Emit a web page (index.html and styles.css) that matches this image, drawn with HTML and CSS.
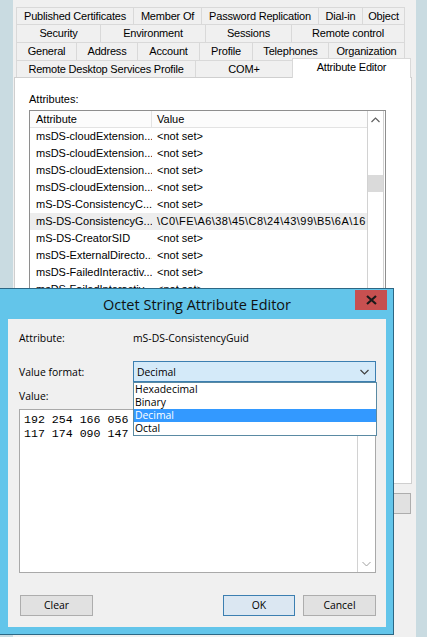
FILE: index.html
```html
<!DOCTYPE html>
<html lang="en">
<head>
    <meta charset="UTF-8">
    <title>Octet String Attribute Editor</title>
    <link rel="stylesheet" href="styles.css">
</head>
<body>
    <!-- background: user properties window -->
    <div class="props">
        <div class="frame-l"></div>
        <div class="client">
            <div class="tab-row r1">
                <div class="tab t-pub">Published Certificates</div>
                <div class="tab t-member">Member Of</div>
                <div class="tab t-pwd">Password Replication</div>
                <div class="tab t-dial">Dial-in</div>
                <div class="tab t-obj last">Object</div>
            </div>
            <div class="tab-row r2">
                <div class="tab t-sec">Security</div>
                <div class="tab t-env">Environment</div>
                <div class="tab t-sess">Sessions</div>
                <div class="tab t-rc last">Remote control</div>
            </div>
            <div class="tab-row r3">
                <div class="tab t-gen">General</div>
                <div class="tab t-addr">Address</div>
                <div class="tab t-acct">Account</div>
                <div class="tab t-prof">Profile</div>
                <div class="tab t-tel">Telephones</div>
                <div class="tab t-org last">Organization</div>
            </div>
            <div class="tab-row r4">
                <div class="tab t-rds">Remote Desktop Services Profile</div>
                <div class="tab t-com">COM+</div>
                <div class="tab t-attr selected last">Attribute Editor</div>
            </div>

            <div class="panel">
                <div class="panel-label">Attributes:</div>
                <div class="listview">
                    <div class="lv-main">
                        <div class="lv-head">
                            <div class="c1">Attribute</div>
                            <div class="c2">Value</div>
                        </div>
                        <div class="lv-row"><div class="c1">msDS-cloudExtension...</div><div class="c2">&lt;not set&gt;</div></div>
                        <div class="lv-row"><div class="c1">msDS-cloudExtension...</div><div class="c2">&lt;not set&gt;</div></div>
                        <div class="lv-row"><div class="c1">msDS-cloudExtension...</div><div class="c2">&lt;not set&gt;</div></div>
                        <div class="lv-row"><div class="c1">msDS-cloudExtension...</div><div class="c2">&lt;not set&gt;</div></div>
                        <div class="lv-row"><div class="c1">mS-DS-ConsistencyC...</div><div class="c2">&lt;not set&gt;</div></div>
                        <div class="lv-row sel"><div class="c1">mS-DS-ConsistencyG...</div><div class="c2 hex">\C0\FE\A6\38\45\C8\24\43\99\B5\6A\16</div></div>
                        <div class="lv-row"><div class="c1">mS-DS-CreatorSID</div><div class="c2">&lt;not set&gt;</div></div>
                        <div class="lv-row"><div class="c1">msDS-ExternalDirecto...</div><div class="c2">&lt;not set&gt;</div></div>
                        <div class="lv-row"><div class="c1">msDS-FailedInteractiv...</div><div class="c2">&lt;not set&gt;</div></div>
                        <div class="lv-row"><div class="c1">msDS-FailedInteractiv...</div><div class="c2">&lt;not set&gt;</div></div>
                        <div class="lv-row"><div class="c1">msDS-GeoCoordinatesA...</div><div class="c2">&lt;not set&gt;</div></div>
                    </div>
                    <div class="lv-scroll">
                        <div class="sb-up">
                            <svg width="9" height="6" viewBox="0 0 9 6"><polyline points="0.5,5 4.5,1 8.5,5" fill="none" stroke="#606060" stroke-width="1.2"/></svg>
                        </div>
                        <div class="sb-thumb"></div>
                    </div>
                </div>
            </div>

            <div class="props-buttons">
                <div class="btn bg-btn">Help</div>
            </div>
        </div>
        <div class="frame-r"></div>
    </div>

    <!-- foreground: octet string editor dialog -->
    <div class="dialog">
        <div class="titlebar">
            <span class="title">Octet String Attribute Editor</span>
            <div class="close">
                <svg width="11" height="10" viewBox="0 0 11 10"><path d="M1 1 L10 9 M10 1 L1 9" stroke="#1a1a1a" stroke-width="2.2"/></svg>
            </div>
        </div>
        <div class="dlg-client">
            <div class="dlg-row attr-row">
                <div class="dlg-label">Attribute:</div>
                <div class="dlg-value">mS-DS-ConsistencyGuid</div>
            </div>
            <div class="dlg-row fmt-row">
                <div class="dlg-label">Value format:</div>
                <div class="combo">
                    <span>Decimal</span>
                    <svg width="9" height="6" viewBox="0 0 9 6"><polyline points="0.5,1 4.5,5 8.5,1" fill="none" stroke="#404040" stroke-width="1.2"/></svg>
                </div>
            </div>
            <div class="dlg-label value-label">Value:</div>
            <div class="value-box">
                <pre class="value-text">192 254 166 056 069 200 036 067 153 181 106 022
117 174 090 147</pre>
                <div class="vb-scroll">
                    <div class="vb-down">
                        <svg width="9" height="6" viewBox="0 0 9 6"><polyline points="0.5,1 4.5,5 8.5,1" fill="none" stroke="#a0a0a0" stroke-width="1"/></svg>
                    </div>
                </div>
            </div>
            <div class="dlg-buttons">
                <div class="btn btn-clear">Clear</div>
                <div class="spacer"></div>
                <div class="btn btn-ok">OK</div>
                <div class="btn btn-cancel">Cancel</div>
            </div>

            <!-- open dropdown of the combo -->
            <div class="dropdown">
                <div class="dd-item">Hexadecimal</div>
                <div class="dd-item">Binary</div>
                <div class="dd-item active">Decimal</div>
                <div class="dd-item">Octal</div>
            </div>
        </div>
    </div>
</body>
</html>
```

FILE: styles.css
```css
body {
    margin: 0;
    width: 427px;
    height: 637px;
    overflow: hidden;
    position: relative;
    background-color: #f0f0f0;
    font-family: "Liberation Sans", Arial, sans-serif;
    font-size: 11px;
    color: #000;
}

/* background window */
.props {
    display: flex;
    height: 637px;
}
.frame-l {
    width: 13px;
    background-color: #c9dbe1;
}
.frame-r {
    width: 11px;
    background-color: #c9dbe1;
}
.client {
    flex: 1;
    background-color: #f0f0f0;
    padding-top: 7px;
}

.tab-row {
    display: flex;
    align-items: flex-start;
    margin-left: 3px;
}
.r1 { height: 17px; }
.r2 { height: 18px; }
.r3 { height: 18px; }
.r4 { height: 17px; }

.tab {
    box-sizing: border-box;
    height: 100%;
    border-top: 1px solid #d9d9d9;
    border-left: 1px solid #d9d9d9;
    background-color: #f0f0f0;
    text-align: center;
    white-space: nowrap;
    letter-spacing: -0.2px;
    line-height: 16px;
}
.r2 .tab, .r3 .tab { line-height: 17px; }
.tab.last { border-right: 1px solid #d9d9d9; }

.t-pub { width: 117px; }
.t-member { width: 68px; }
.t-pwd { width: 117px; }
.t-dial { width: 44px; }
.t-obj { width: 43px; }
.t-sec { width: 84px; }
.t-env { width: 105px; }
.t-sess { width: 86px; }
.t-rc { width: 114px; }
.t-gen { width: 60px; }
.t-addr { width: 61px; }
.t-acct { width: 62px; }
.t-prof { width: 53px; }
.t-tel { width: 76px; }
.t-org { width: 77px; }
.t-rds { width: 179px; }
.t-com { width: 97px; }
.t-attr { width: 119px; }

.tab.selected {
    position: relative;
    z-index: 1;
    height: 20px;
    margin-top: -2px;
    background-color: #fff;
    line-height: 17px;
}

.panel {
    box-sizing: border-box;
    width: 398px;
    height: 407px;
    margin-left: 1px;
    border: 1px solid #cfcfcf;
    background-color: #fff;
    padding: 15px 0 0 14px;
}
.panel-label {
    line-height: 13px;
    height: 13px;
}
.listview {
    box-sizing: border-box;
    display: flex;
    width: 357px;
    height: 362px;
    margin-top: 4px;
    border: 1px solid #8e8e8e;
}
.lv-main {
    flex: 1;
    overflow: hidden;
}
.lv-head {
    display: flex;
    height: 16px;
    line-height: 16px;
    background-color: #fcfcfc;
    border-bottom: 1px solid #e3e3e3;
}
.lv-head .c1 { border-right: 1px solid #e3e3e3; }
.lv-row {
    display: flex;
    height: 17px;
    line-height: 17px;
}
.lv-row.sel { background-color: #ededed; }
.c1 {
    box-sizing: border-box;
    width: 122px;
    padding-left: 6px;
    white-space: nowrap;
    overflow: hidden;
}
.c2 {
    flex: 1;
    padding-left: 5px;
    white-space: nowrap;
    overflow: hidden;
}
.c2.hex { letter-spacing: 0.45px; }
.lv-scroll {
    box-sizing: border-box;
    width: 17px;
    margin-right: 1px;
    border-left: 1px solid #d2d2d2;
    border-right: 1px solid #d2d2d2;
    background-color: #fff;
}
.sb-up {
    height: 17px;
    display: flex;
    align-items: center;
    justify-content: center;
}
.sb-thumb {
    height: 17px;
    margin-top: 47px;
    background-color: #dadada;
}

.props-buttons {
    display: flex;
    justify-content: flex-end;
    margin-top: 9px;
    margin-right: 5px;
}
.btn {
    box-sizing: border-box;
    height: 21px;
    border: 1px solid #adadad;
    background-color: #e1e1e1;
    text-align: center;
    line-height: 19px;
}
.bg-btn { width: 75px; }

/* dialog */
.dialog {
    position: absolute;
    left: -1px;
    top: 288px;
    box-sizing: border-box;
    width: 395px;
    height: 347px;
    border: 1px solid #2c6784;
    background-color: #63c5ea;
    padding: 0 7px 7px 8px;
    font-family: "Open Sans", "Noto Sans", sans-serif;
    font-size: 10.4px;
}
.titlebar {
    position: relative;
    height: 30px;
    display: flex;
    align-items: center;
    justify-content: center;
}
.title {
    font-size: 14.5px;
    color: #111;
}
.close {
    position: absolute;
    right: -1px;
    top: 1px;
    width: 32px;
    height: 20px;
    background-color: #c75050;
    display: flex;
    align-items: center;
    justify-content: center;
}

.dlg-client {
    position: relative;
    height: 308px;
    box-sizing: border-box;
    background-color: #f0f0f0;
    padding: 11px 10px 0 11px;
}
.dlg-row {
    display: flex;
    align-items: center;
}
.attr-row { height: 16px; }
.fmt-row {
    height: 21px;
    margin-top: 15px;
}
.dlg-label {
    width: 114px;
    flex-shrink: 0;
}
.value-label {
    height: 16px;
    line-height: 16px;
    margin-top: 6px;
}
.combo {
    box-sizing: border-box;
    width: 244px;
    height: 21px;
    border: 1px solid #3c7fb1;
    background-color: #d4eaf9;
    display: flex;
    align-items: center;
    justify-content: space-between;
    padding: 0 6px 0 3px;
}

.value-box {
    box-sizing: border-box;
    display: flex;
    width: 357px;
    height: 164px;
    margin-top: 5px;
    border: 1px solid #a9a9a9;
    background-color: #fff;
}
.value-text {
    flex: 1;
    margin: 0;
    padding: 3px 0 0 4px;
    font-family: "Liberation Mono", "Courier New", monospace;
    font-size: 11.6px;
    line-height: 14px;
    overflow: hidden;
}
.vb-scroll {
    width: 17px;
    border-left: 1px solid #d2d2d2;
    display: flex;
    flex-direction: column;
    justify-content: flex-end;
}
.vb-down {
    height: 17px;
    display: flex;
    align-items: center;
    justify-content: center;
}

.dlg-buttons {
    display: flex;
    margin-top: 22px;
}
.spacer { flex: 1; }
.btn-clear {
    width: 73px;
    margin-left: 1px;
}
.btn-ok {
    width: 72px;
    border-color: #3c7fb1;
    background-color: #dbe7f2;
}
.btn-cancel {
    width: 73px;
    margin-left: 8px;
}

.dropdown {
    position: absolute;
    left: 125px;
    top: 63px;
    box-sizing: border-box;
    width: 244px;
    border: 1px solid #5a8aa3;
    background-color: #fff;
}
.dd-item {
    height: 13px;
    line-height: 13px;
    padding-left: 1px;
}
.dd-item.active {
    background-color: #3399ff;
    color: #fff;
}
```
